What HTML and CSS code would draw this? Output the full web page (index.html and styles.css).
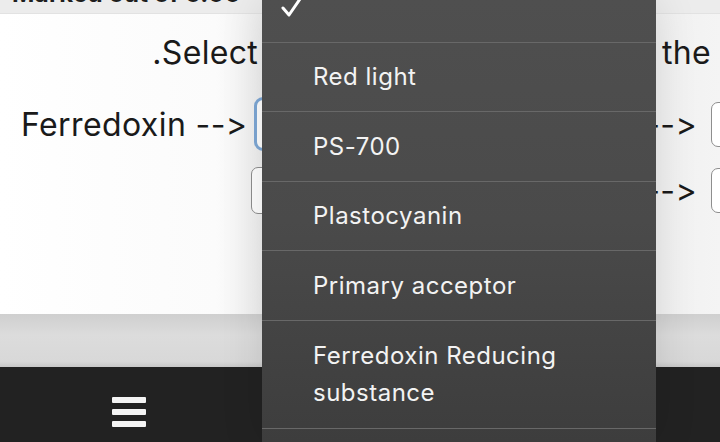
FILE: index.html
```html
<!DOCTYPE html>
<html>
<head>
<meta charset="utf-8">
<link rel="stylesheet" href="styles.css">
</head>
<body>
<div class="screen">
  <div class="infobar"><span class="infotext">Marked out of 5.00</span></div>
  <div class="content">
    <div class="qline">
      <span class="qleft">.Select</span>
      <span class="qright">the</span>
    </div>
    <div class="row row1">
      <span class="label">Ferredoxin --&gt;</span>
      <span class="box box-focus"></span>
      <span class="arrow">--&gt;</span>
      <span class="box box-right"></span>
    </div>
    <div class="row row2">
      <span class="box box-plain"></span>
      <span class="arrow">--&gt;</span>
      <span class="box box-right"></span>
    </div>
  </div>
  <div class="band"></div>
  <div class="footer">
    <div class="burger"><span></span><span></span><span></span></div>
  </div>

  <div class="picker">
    <ul class="options">
      <li class="opt checked"><svg class="check" width="22" height="22" viewBox="0 0 22 22"><polyline points="3,11 9,18 20,2" fill="none" stroke="#fff" stroke-width="3" stroke-linecap="round" stroke-linejoin="round"/></svg></li>
      <li class="opt">Red light</li>
      <li class="opt">PS-700</li>
      <li class="opt">Plastocyanin</li>
      <li class="opt">Primary acceptor</li>
      <li class="opt multi">Ferredoxin Reducing<br>substance</li>
      <li class="opt"></li>
    </ul>
  </div>
</div>
</body>
</html>
```
FILE: styles.css
```css
html, body {
  margin: 0;
  padding: 0;
}
body {
  width: 720px;
  height: 442px;
  overflow: hidden;
  font-family: Inter, "Liberation Sans", Arial, sans-serif;
  font-feature-settings: "liga" 0, "calt" 0;
  font-variant-ligatures: none;
  background: #222;
}
.screen {
  position: relative;
  width: 720px;
  height: 442px;
  overflow: hidden;
  display: flex;
  flex-direction: column;
}
.infobar {
  height: 13px;
  flex: none;
  background: #ececec;
  border-bottom: 1px solid #e2e2e2;
  overflow: hidden;
  padding-left: 12px;
}
.infotext {
  display: block;
  margin-top: -18px;
  font-size: 24px;
  line-height: 24px;
  font-weight: 700;
  color: #1e1e1e;
  letter-spacing: 0.3px;
}
.content {
  height: 300px;
  flex: none;
  overflow: hidden;
  background: linear-gradient(90deg, #ffffff 0%, #fbfbfb 30%, #efefef 37%, #f1f1f1 92%, #f4f4f4 100%);
  position: relative;
}
.qline {
  display: flex;
  height: 64px;
  padding-top: 19px;
  font-size: 32px;
  letter-spacing: 0.3px;
  color: #1a1a1a;
  line-height: 40px;
}
.qleft {
  width: 258px;
  text-align: right;
  flex: none;
}
.qright {
  margin-left: 404px;
  flex: none;
}
.row {
  display: flex;
  align-items: center;
  font-size: 32px;
  letter-spacing: 0.4px;
  color: #1a1a1a;
}
.row > * {
  flex: none;
}
.row1 {
  height: 54px;
}
.row2 {
  height: 47px;
  margin-top: 16px;
}
.label {
  margin-left: 21px;
  width: 233px;
  white-space: nowrap;
}
.box {
  display: block;
  box-sizing: border-box;
  height: 45px;
  background: #fff;
  border: 1.5px solid #8e8e8e;
  border-radius: 7px;
}
.box-focus {
  width: 60px;
  height: 54px;
  border: 3px solid #7ea8d6;
  border-radius: 9px;
}
.box-plain {
  margin-left: 251px;
  width: 60px;
  height: 47px;
}
.row1 .arrow {
  margin-left: 326px;
}
.row2 .arrow {
  margin-left: 329px;
}
.arrow {
  width: 57px;
  text-align: right;
  margin-right: 14px;
  white-space: nowrap;
}
.box-right {
  width: 30px;
}
.band {
  height: 53px;
  flex: none;
  background: linear-gradient(180deg, #cfcfcf 0%, #dcdcdc 40%, #d8d8d8 90%, #c8c8c8 100%);
}
.footer {
  flex: 1;
  background: #222222;
  padding-top: 30px;
  padding-left: 112px;
}
.burger {
  display: flex;
  flex-direction: column;
  gap: 6px;
  width: 34px;
}
.burger span {
  display: block;
  height: 6px;
  background: #f4f4f4;
  border-radius: 1px;
}
.picker {
  position: absolute;
  left: 262px;
  top: 0;
  width: 394px;
  height: 442px;
  background: linear-gradient(180deg, #4f4f4f 0%, #4a4a4a 50%, #3d3d3d 100%);
  box-shadow: 0 0 40px rgba(0, 0, 0, 0.12);
  overflow: hidden;
}
.options {
  list-style: none;
  margin: -27px 0 0 0;
  padding: 0;
}
.opt {
  box-sizing: border-box;
  height: 69.5px;
  padding: 0 20px 0 51px;
  border-bottom: 1.5px solid #686868;
  color: #f3f3f3;
  font-size: 24px;
  letter-spacing: 0.5px;
  line-height: 37px;
  display: flex;
  align-items: center;
}
.opt.multi {
  height: 108px;
}
.opt.checked {
  padding-left: 18px;
  padding-top: 2px;
}
.check {
  display: block;
}
```
